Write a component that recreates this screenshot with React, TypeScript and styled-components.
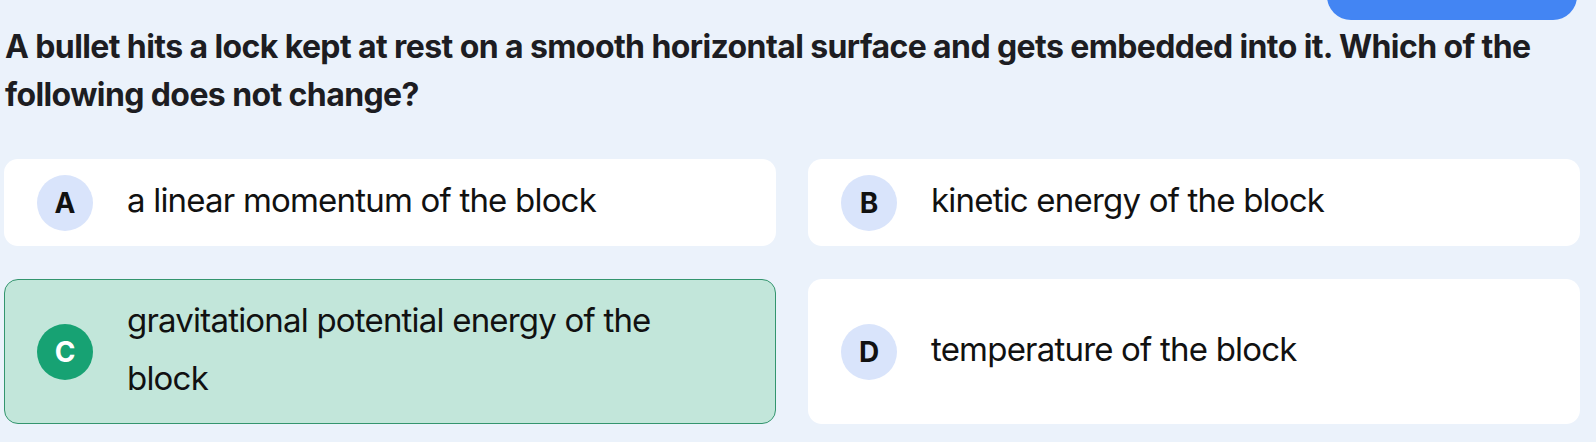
import React from 'react';
import styled, { createGlobalStyle } from 'styled-components';

const GlobalStyle = createGlobalStyle`
  html, body {
    margin: 0;
    padding: 0;
    background: #ebf2fb;
  }
  body {
    font-family: Inter, "Noto Sans", sans-serif;
    color: #1d1d22;
  }
`;

const Page = styled.div`
  display: flex;
  flex-direction: column;
  padding: 0 16px 0 4px;
  height: 442px;
  overflow: hidden;
  box-sizing: border-box;
`;

const TopBar = styled.div`
  display: flex;
  justify-content: flex-end;
  padding-right: 3px;
`;

const NextButton = styled.button`
  width: 250px;
  height: 48px;
  margin-top: -28px;
  border: none;
  border-radius: 24px;
  background-color: #4385f3;
`;

const Question = styled.h2`
  margin: 3px 0 0 1px;
  font-size: 32px;
  line-height: 48px;
  font-weight: 700;
  letter-spacing: -0.6px;
  color: #1d1d22;
`;

const Options = styled.div`
  display: grid;
  grid-template-columns: 1fr 1fr;
  column-gap: 32px;
  row-gap: 33px;
  margin-top: 40px;
`;

const OptionCard = styled.div<{ selected: boolean }>`
  display: flex;
  align-items: center;
  gap: 34px;
  padding: 0 60px 0 32px;
  box-sizing: border-box;
  border-radius: 14px;
  background-color: ${props => props.selected ? '#c2e6da' : '#ffffff'};
  border: 1.5px solid ${props => props.selected ? '#33956e' : 'transparent'};
`;

const Letter = styled.div<{ selected: boolean }>`
  flex: 0 0 56px;
  height: 56px;
  border-radius: 50%;
  display: flex;
  align-items: center;
  justify-content: center;
  background-color: ${props => props.selected ? '#17a273' : '#d9e4fb'};
  color: ${props => props.selected ? '#ffffff' : '#111111'};
  font-size: 28px;
  font-weight: 700;
`;

const OptionText = styled.div`
  padding: 11px 0 16px;
  font-size: 33px;
  line-height: 58px;
  font-weight: 400;
  letter-spacing: -0.8px;
  color: #111111;
`;

const options = [
  { key: 'A', text: 'a linear momentum of the block' },
  { key: 'B', text: 'kinetic energy of the block' },
  { key: 'C', text: 'gravitational potential energy of the block' },
  { key: 'D', text: 'temperature of the block' },
];

function App(): React.ReactElement {
  const selected = 'C';

  return (
    <>
      <GlobalStyle />
      <Page>
        <TopBar>
          <NextButton aria-label="Next" />
        </TopBar>
        <Question>
          A bullet hits a lock kept at rest on a smooth horizontal surface and gets embedded into it. Which of the following does not change?
        </Question>
        <Options>
          {options.map(o => (
            <OptionCard key={o.key} selected={o.key === selected}>
              <Letter selected={o.key === selected}>{o.key}</Letter>
              <OptionText>{o.text}</OptionText>
            </OptionCard>
          ))}
        </Options>
      </Page>
    </>
  );
}

export default App;
